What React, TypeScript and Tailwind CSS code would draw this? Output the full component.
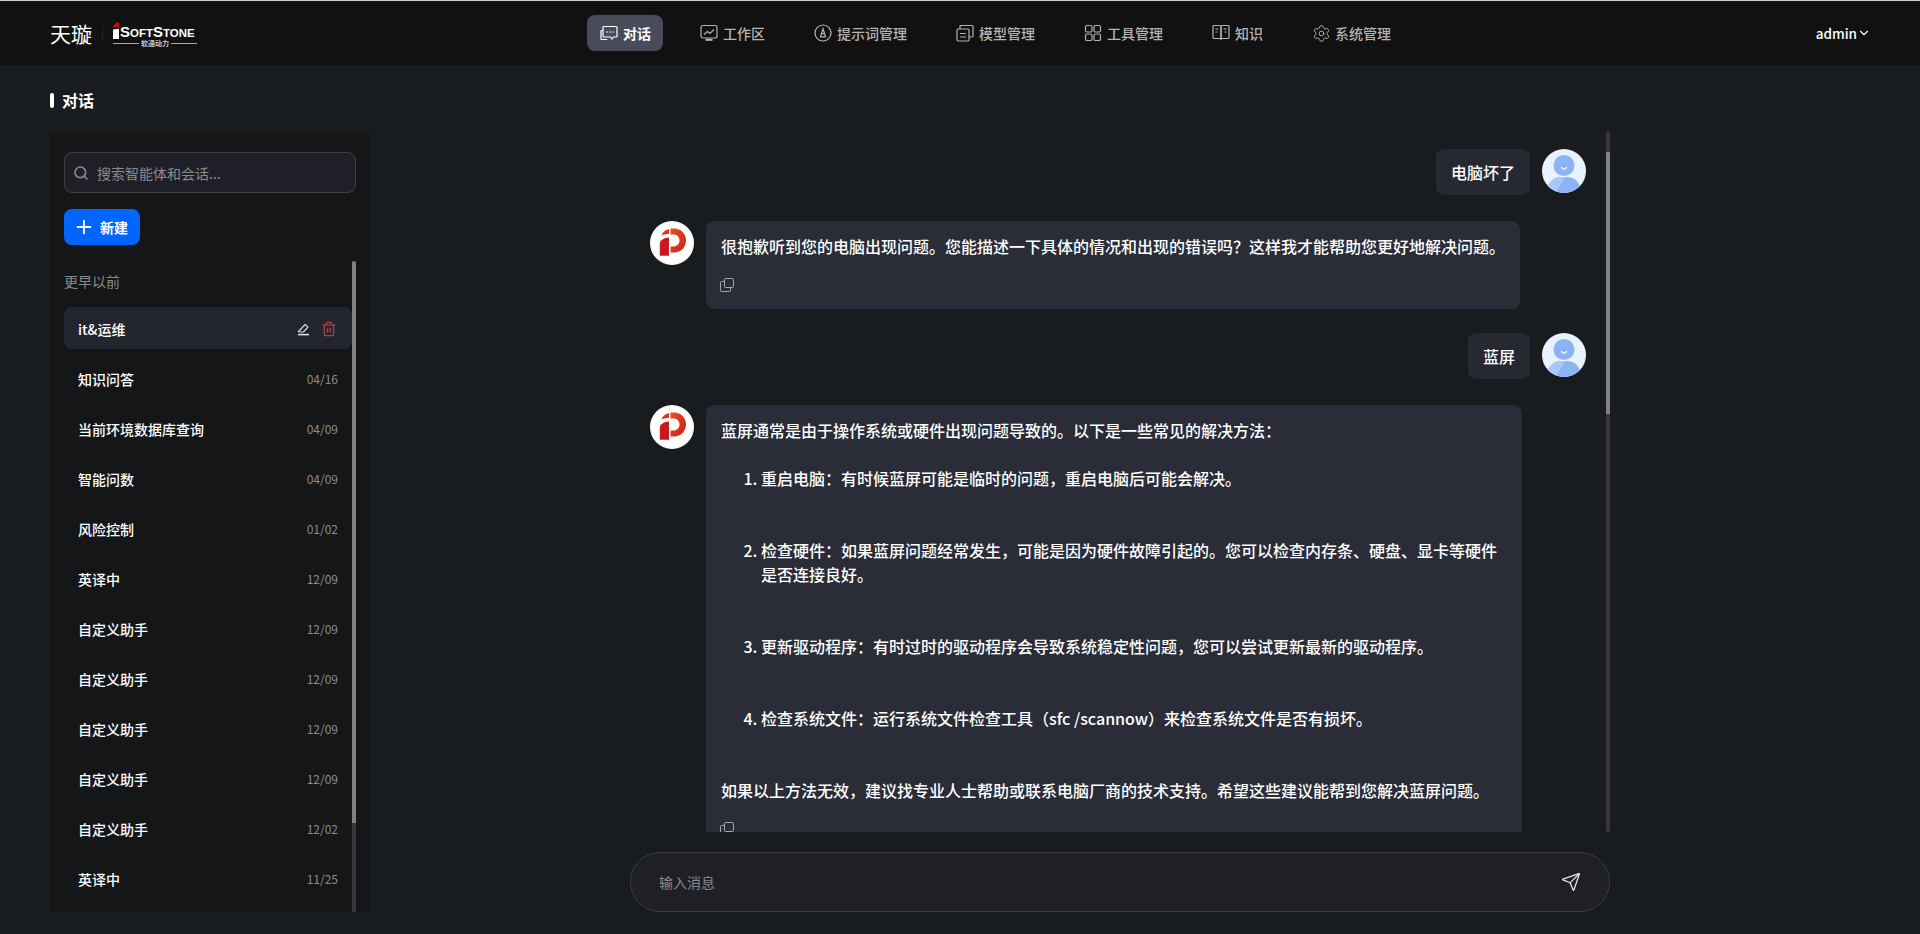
import { ChevronDown, Plus, Search, Send, Settings, Trash2 } from 'lucide-react';
import type { ReactNode } from 'react';

function ChatIcon() {
  return (
    <svg width="18" height="18" viewBox="0 0 18 18" fill="none" stroke="currentColor" strokeWidth="1.2">
      <path d="M4 2.500h12a1 1 0 0 1 1 1v8.500a1 1 0 0 1-1 1h-2.500l-1.500 2-1.500-2H4a1 1 0 0 1-1-1V3.500a1 1 0 0 1 1-1z" />
      <path d="M3 6.500H1.600a.6.6 0 0 0-.6.6v7.600c0 .5.4.8.8.8h5.400" />
      <circle cx="7" cy="8" r=".8" fill="currentColor" stroke="none" />
      <circle cx="10" cy="8" r=".8" fill="currentColor" stroke="none" />
      <circle cx="13" cy="8" r=".8" fill="currentColor" stroke="none" />
    </svg>
  );
}

function MonitorIcon() {
  return (
    <svg width="18" height="18" viewBox="0 0 18 18" fill="none" stroke="currentColor" strokeWidth="1.2">
      <rect x="1" y="1.500" width="16" height="12.500" rx="2" />
      <path d="M4 10.500l3.500-3 2.500 2 4-4" />
      <path d="M5.500 15.800h7" strokeWidth="2" />
    </svg>
  );
}

function PromptIcon() {
  return (
    <svg width="18" height="18" viewBox="0 0 18 18" fill="none" stroke="currentColor" strokeWidth="1.2">
      <circle cx="9" cy="9" r="8" />
      <path d="M5.800 12.800h6.400M6.500 12.800L9 4.800l2.500 8" />
      <path d="M7.500 9.800h3" />
    </svg>
  );
}

function ModelIcon() {
  return (
    <svg width="18" height="18" viewBox="0 0 18 18" fill="none" stroke="currentColor" strokeWidth="1.2">
      <rect x="1" y="5" width="12" height="12" rx="1.200" />
      <path d="M4 5V2.500A1 1 0 0 1 5 1.500h11a1 1 0 0 1 1 1V12a1 1 0 0 1-1 1h-3" />
      <path d="M4 9.500h6M4 13h6" />
    </svg>
  );
}

function ToolsIcon() {
  return (
    <svg width="18" height="18" viewBox="0 0 18 18" fill="none" stroke="currentColor" strokeWidth="1.2">
      <rect x="1.500" y="1.500" width="6.500" height="6.500" rx="1.600" />
      <rect x="10" y="1.500" width="6.500" height="6.500" rx="1.600" />
      <rect x="1.500" y="10" width="6.500" height="6.500" rx="1.600" />
      <rect x="10" y="10" width="6.500" height="6.500" rx="1.600" />
    </svg>
  );
}

function BookIcon() {
  return (
    <svg width="18" height="18" viewBox="0 0 18 18" fill="none" stroke="currentColor" strokeWidth="1.2">
      <path d="M1 2.500A1 1 0 0 1 2 1.500h5.500C8.300 1.500 9 2.100 9 3v12.500c0-.7-.6-1-1.300-1H2a1 1 0 0 1-1-1z" />
      <path d="M17 2.500a1 1 0 0 0-1-1h-5.500C9.700 1.500 9 2.100 9 3v12.500c0-.7.6-1 1.300-1H16a1 1 0 0 0 1-1z" />
      <path d="M3.500 5h3M3.500 8h2M11.500 5h3M12.500 8h2" />
    </svg>
  );
}

function NavItem({ icon, label, active }: { icon: ReactNode; label: string; active?: boolean }) {
  return (
    <div
      className={
        active
          ? 'flex h-9 items-center gap-[5px] rounded-lg bg-[#494b5b] pl-[13px] pr-[12px] text-sm font-bold text-white'
          : 'flex h-9 items-center gap-[5px] rounded-lg pl-[13px] pr-[12px] text-sm font-medium text-[#b4b4b4]'
      }
    >
      {icon}
      <span>{label}</span>
    </div>
  );
}

function Logo() {
  return (
    <div className="mt-[2px] flex w-[84px] flex-col">
      <div className="flex h-[17px] font-['Liberation_Sans',sans-serif] font-bold text-white">
        <svg width="7" height="17" viewBox="0 0 7 17" className="shrink-0">
          <path d="M0 6C0.400 2.800 2.500 0.500 6 0v5C3.500 5 1.500 5.300 0 6z" fill="#c00d0d" />
          <path d="M0 7.500L6 6.800V17H0z" fill="#fff" />
        </svg>
        <div className="flex items-baseline self-end leading-[11px]">
          <span className="text-[15px]">S</span>
          <span className="text-[11.500px]">OFT</span>
          <span className="text-[15px]">S</span>
          <span className="text-[11.500px]">TONE</span>
        </div>
      </div>
      <div className="mt-[1px] flex items-center gap-[2px] text-[7px] font-bold leading-[7px] text-[#c8c8c8]">
        <div className="h-px flex-1 bg-[#a8a8a8]" />
        <span>软通动力</span>
        <div className="h-px flex-1 bg-[#a8a8a8]" />
      </div>
    </div>
  );
}

function Header() {
  return (
    <header className="flex h-[65px] shrink-0 items-center border-t border-[#cfcfcf] bg-[#111111] pl-[50px] pr-[49px]">
      <div className="flex w-[537px] items-center">
        <span className="text-[21px] leading-none text-white">天璇</span>
        <div className="mx-[10px] h-4 w-px bg-[#222222]" />
        <Logo />
      </div>
      <nav className="flex items-center gap-6">
        <NavItem active icon={<ChatIcon />} label="对话" />
        <NavItem icon={<MonitorIcon />} label="工作区" />
        <NavItem icon={<PromptIcon />} label="提示词管理" />
        <NavItem icon={<ModelIcon />} label="模型管理" />
        <NavItem icon={<ToolsIcon />} label="工具管理" />
        <NavItem icon={<BookIcon />} label="知识" />
        <NavItem icon={<Settings size={19} strokeWidth={1.2} className="-mx-[0.5px]" />} label="系统管理" />
      </nav>
      <div className="ml-auto flex items-center text-[13.500px] font-medium text-white">
        admin
        <ChevronDown size={14} strokeWidth={2} />
      </div>
    </header>
  );
}

const conversations = [
  { title: '知识问答', date: '04/16' },
  { title: '当前环境数据库查询', date: '04/09' },
  { title: '智能问数', date: '04/09' },
  { title: '风险控制', date: '01/02' },
  { title: '英译中', date: '12/09' },
  { title: '自定义助手', date: '12/09' },
  { title: '自定义助手', date: '12/09' },
  { title: '自定义助手', date: '12/09' },
  { title: '自定义助手', date: '12/09' },
  { title: '自定义助手', date: '12/02' },
  { title: '英译中', date: '11/25' },
];

function Sidebar() {
  return (
    <aside className="flex h-[780px] w-[320px] shrink-0 flex-col bg-[#151618] pl-[14px] pr-[14px] pt-5">
      <div className="flex h-[41px] items-center gap-2 rounded-lg border border-[#3f4045] bg-[#1f2027] pl-2 text-sm text-[#8a8a8e]">
        <Search size={16} strokeWidth={2.4} />
        <span>搜索智能体和会话...</span>
      </div>
      <div className="mt-4 flex h-9 w-[76px] items-center gap-[5px] rounded-lg bg-[#0066ff] pl-[9px] text-sm font-bold text-white">
        <Plus size={22} strokeWidth={2} />
        <span>新建</span>
      </div>
      <div className="mt-4 flex min-h-0 flex-1">
        <div className="min-w-0 flex-1 overflow-hidden">
          <div className="mt-[7px] h-[26px] text-sm leading-[26px] text-[#8c8c8c]">更早以前</div>
          <div className="mt-[13px] flex h-[42px] items-center justify-between rounded-lg bg-[#24262f] pl-[14px] pr-[15px] pt-px text-sm font-medium text-white">
            <span>it&amp;运维</span>
            <div className="flex items-center gap-[10px]">
              <svg width="14" height="14" viewBox="0 0 14 14" fill="none" stroke="#dcdcdc" strokeWidth="1.200">
                <path d="M1.500 9.500L8 2.500l3 2.500-4.500 5H2.500z" />
                <path d="M1 12.600h11" strokeWidth="1.600" />
              </svg>
              <Trash2 size={16} color="#b8404a" strokeWidth={1.8} />
            </div>
          </div>
          {conversations.map((c, i) => (
            <div key={i} className="mt-2 flex h-[42px] items-center justify-between pl-[14px] pr-[14px] pt-px">
              <span className="text-sm font-medium text-white">{c.title}</span>
              <span className="text-xs text-[#8c8c8c]">{c.date}</span>
            </div>
          ))}
        </div>
        <div className="h-full w-1 shrink-0 rounded-t-sm bg-[#3a3640]">
          <div className="h-[562px] rounded-t-sm bg-[#808080]" />
        </div>
      </div>
    </aside>
  );
}

function CopyIcon() {
  return (
    <svg width="14" height="14" viewBox="0 0 14 14" fill="none" stroke="#a6a7ad" strokeWidth="1" className="-ml-px shrink-0">
      <rect x="4.500" y="0.500" width="9" height="9" rx="1" />
      <path d="M4.500 3.500H1.500a1 1 0 0 0-1 1v8a1 1 0 0 0 1 1h8a1 1 0 0 0 1-1v-3" />
    </svg>
  );
}

function BotAvatar() {
  return (
    <div className="flex size-11 shrink-0 items-center justify-center rounded-full bg-white">
      <svg width="30" height="30" viewBox="0 0 30 30">
        <defs>
          <linearGradient id="ring" x1="0" y1="0" x2="1" y2="1">
            <stop offset="0" stopColor="#e8501f" />
            <stop offset="1" stopColor="#c9201a" />
          </linearGradient>
        </defs>
        <path d="M13.500 0.500H17C24 0.500 29 6 29 12.500C29 19 24 24.500 17 24.500H13.500V18.500H16.500C20 18.500 22.500 16 22.500 12.500C22.500 9 20 6.500 16.500 6.500H13.500Z" fill="url(#ring)" />
        <path d="M2.800 27.700V16C2.800 12.500 6 10 12 9.500V27.700Z" fill="#c8191c" />
        <path d="M12 1C8 2 5.500 4.500 4.500 7.500C6.500 6.500 9 6 12 6Z" fill="#d8351c" />
      </svg>
    </div>
  );
}

function UserAvatar() {
  return (
    <div className="size-11 shrink-0 overflow-hidden rounded-full bg-[#e8f3ff]">
      <svg width="44" height="44" viewBox="0 0 44 44">
        <circle cx="22" cy="16.500" r="10.500" fill="#8cb4f5" />
        <path d="M19.500 18.500c1 2 4 2 5 0" fill="none" stroke="#eef5ff" strokeWidth="1.300" strokeLinecap="round" />
        <path d="M5 44c0-10 6-16 14-16h6c8 0 14 6 14 16z" fill="#8cb4f5" />
        <path d="M5 44c0-10 6-16 14-16l4 0-9 16z" fill="#a8c8fa" />
      </svg>
    </div>
  );
}

function UserMessage({ text, className }: { text: string; className?: string }) {
  return (
    <div className={`flex justify-end gap-3 ${className ?? ''}`}>
      <div className="rounded-lg bg-[#262832] px-[15px] py-[11px] text-base font-medium leading-6 text-white">{text}</div>
      <UserAvatar />
    </div>
  );
}

function Chat() {
  return (
    <section className="ml-[260px] flex h-[780px] w-[980px] shrink-0 flex-col">
      <div className="flex h-[700px]">
        <div className="flex min-w-0 flex-1 flex-col gap-[26px] overflow-hidden px-5 pt-[17px] text-base font-medium leading-6 text-white">
          <UserMessage text="电脑坏了" />
          <div className="flex gap-3">
            <BotAvatar />
            <div className="h-[88px] w-[814px] rounded-lg bg-[#2a2c37] pl-[15px] pr-4 pt-[13px]">
              <p className="whitespace-nowrap">很抱歉听到您的电脑出现问题。您能描述一下具体的情况和出现的错误吗？这样我才能帮助您更好地解决问题。</p>
              <div className="mt-5">
                <CopyIcon />
              </div>
            </div>
          </div>
          <UserMessage text="蓝屏" className="-mt-[2px]" />
          <div className="flex gap-3">
            <BotAvatar />
            <div className="w-[816px] shrink-0 rounded-lg bg-[#2a2c37] pb-[17px] pl-[15px] pr-4 pt-[13px]">
              <p>蓝屏通常是由于操作系统或硬件出现问题导致的。以下是一些常见的解决方法：</p>
              <ol className="mt-6 list-decimal pl-10">
                <li className="mb-12">重启电脑：有时候蓝屏可能是临时的问题，重启电脑后可能会解决。</li>
                <li className="mb-12">检查硬件：如果蓝屏问题经常发生，可能是因为硬件故障引起的。您可以检查内存条、硬盘、显卡等硬件是否连接良好。</li>
                <li className="mb-12">更新驱动程序：有时过时的驱动程序会导致系统稳定性问题，您可以尝试更新最新的驱动程序。</li>
                <li className="mb-12">检查系统文件：运行系统文件检查工具（sfc /scannow）来检查系统文件是否有损坏。</li>
              </ol>
              <p>如果以上方法无效，建议找专业人士帮助或联系电脑厂商的技术支持。希望这些建议能帮到您解决蓝屏问题。</p>
              <div className="mt-5">
                <CopyIcon />
              </div>
            </div>
          </div>
        </div>
        <div className="h-full w-1 shrink-0 rounded-sm bg-[#3a3640]">
          <div className="mt-5 h-[262px] bg-[#808080]" />
        </div>
      </div>
      <div className="mt-5 flex h-[60px] items-center justify-between rounded-[30px] border border-[#3d3e42] bg-[#1f2026] pl-7 pr-7 text-sm text-[#8a8a8e]">
        <span>输入消息</span>
        <Send size={20} color="#e6e6e6" strokeWidth={1.5} />
      </div>
    </section>
  );
}

export default function App() {
  return (
    <div className="flex h-[934px] w-[1920px] flex-col overflow-hidden bg-[#181c1f] font-['Noto_Sans_CJK_SC',sans-serif]">
      <Header />
      <main className="flex min-h-0 flex-1 flex-col px-[50px]">
        <div className="flex h-[67px] shrink-0 items-center gap-2 pt-[3px] text-base font-bold text-white">
          <div className="h-[15px] w-1 rounded-sm bg-white" />
          <span>对话</span>
        </div>
        <div className="flex">
          <Sidebar />
          <Chat />
        </div>
      </main>
    </div>
  );
}
